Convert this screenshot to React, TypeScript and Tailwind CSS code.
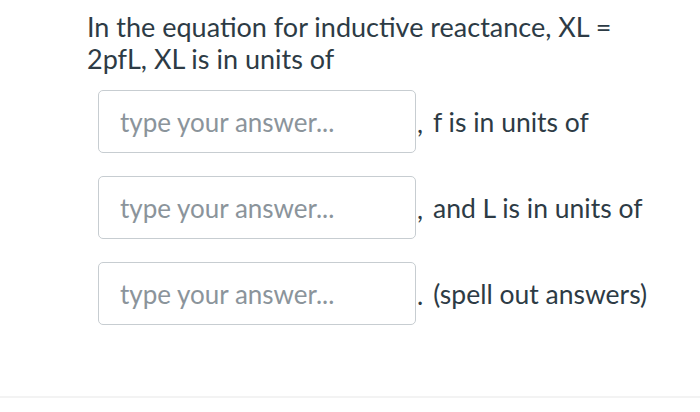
export default function App() {
  const rows = [
    { after: ',', text: 'f is in units of' },
    { after: ',', text: 'and L is in units of' },
    { after: '.', text: '(spell out answers)' },
  ]
  return (
    <div
      className="w-[700px] h-[412px] bg-white flex flex-col text-[#2d3b45]"
      style={{ fontFamily: 'Lato, "Noto Sans", sans-serif' }}
    >
      <div className="flex-1 pl-[87px] pt-[11px]">
        <p className="text-[27px] leading-[32px] w-[560px]">
          In the equation for inductive reactance, XL = 2pfL, XL is in units of
        </p>
        <div className="mt-[15px] ml-[11px] flex flex-col gap-[23px]">
          {rows.map((r, i) => (
            <div key={i} className="flex items-center">
              <input
                className="w-[318px] h-[63px] border border-[#c7cdd1] rounded-[5px] px-[21px] text-[26px] placeholder:text-[#8b949b] outline-none"
                placeholder="type your answer..."
              />
              <span className="text-[26.5px] leading-[32px] ml-[1px] mt-[2px]">{r.after}</span>
              <span className="text-[26.5px] leading-[32px] ml-[10px]">{r.text}</span>
            </div>
          ))}
        </div>
      </div>
      <div className="h-[2px] bg-[#f3f3f3] mb-[14px]" />
    </div>
  )
}
